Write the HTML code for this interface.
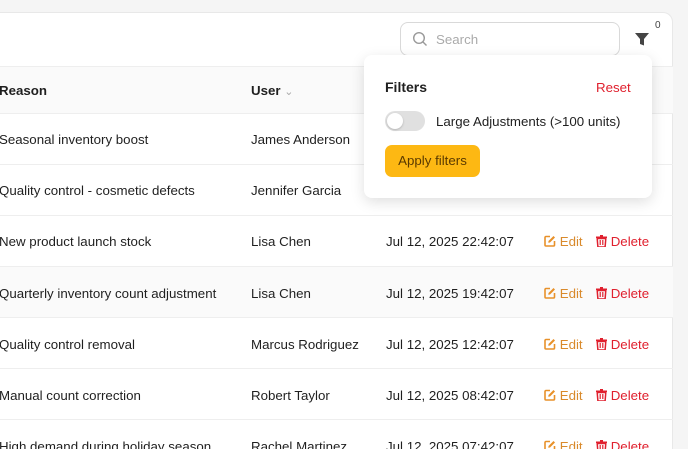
<!DOCTYPE html>
<html style="overflow:hidden;width:688px;height:449px"><head><style>
*{box-sizing:border-box;margin:0;padding:0}
body{width:688px;height:449px;overflow:hidden;background:#f5f5f5;font-family:"Liberation Sans",sans-serif;font-size:13.3px;color:#1f1f1f;position:relative}
.card{position:absolute;left:-20px;top:12px;width:693px;height:437px;background:#fff;border:1px solid #e8e8e8;border-bottom:none;border-radius:10px 10px 0 0;overflow:hidden}
.hdr{position:absolute;left:0;top:66px;width:673px;height:48px;background:#fafafa;border-top:1px solid #eee;border-bottom:1px solid #eee}
.row{position:absolute;left:0;width:673px;height:51px;border-bottom:1px solid #eee}
.t{position:absolute;white-space:nowrap}
.search{position:absolute;left:400px;top:22px;width:220px;height:34px;border:1px solid #d9d9d9;border-radius:8px;background:#fff}
.pop{position:absolute;left:364px;top:55px;width:288px;height:143px;background:#fff;border-radius:8px;box-shadow:0 4px 14px rgba(0,0,0,.13)}
.edit{color:#d98a2c}.del{color:#e0202e}
</style></head><body>
<div class="card"></div>
<div class="hdr"></div>
<div class="t" style="left:-1px;top:83px;font-weight:bold">Reason</div>
<div class="t" style="left:251px;top:83px;font-weight:bold">User <span style="color:#aaa;font-weight:normal;font-size:11px">&#8964;</span></div>
<div class="row" style="top:114px"></div>
<div class="row" style="top:165px"></div>
<div class="row" style="top:216px"></div>
<div class="row" style="top:267px;background:#fafafa"></div>
<div class="row" style="top:318px"></div>
<div class="row" style="top:369px"></div>
<div class="row" style="top:420px"></div>
<div class="t" style="left:-1px;top:132px">Seasonal inventory boost</div><div class="t" style="left:251px;top:132px">James Anderson</div>
<div class="t" style="left:-1px;top:183px">Quality control - cosmetic defects</div><div class="t" style="left:251px;top:183px">Jennifer Garcia</div>
<div class="t" style="left:-1px;top:234px">New product launch stock</div><div class="t" style="left:251px;top:234px">Lisa Chen</div><div class="t" style="left:386px;top:234px">Jul 12, 2025 22:42:07</div>
<div class="t" style="left:-1px;top:286px">Quarterly inventory count adjustment</div><div class="t" style="left:251px;top:286px">Lisa Chen</div><div class="t" style="left:386px;top:286px">Jul 12, 2025 19:42:07</div>
<div class="t" style="left:-1px;top:337px">Quality control removal</div><div class="t" style="left:251px;top:337px">Marcus Rodriguez</div><div class="t" style="left:386px;top:337px">Jul 12, 2025 12:42:07</div>
<div class="t" style="left:-1px;top:388px">Manual count correction</div><div class="t" style="left:251px;top:388px">Robert Taylor</div><div class="t" style="left:386px;top:388px">Jul 12, 2025 08:42:07</div>
<div class="t" style="left:-1px;top:439px">High demand during holiday season</div><div class="t" style="left:251px;top:439px">Rachel Martinez</div><div class="t" style="left:386px;top:439px">Jul 12, 2025 07:42:07</div>
<div id="acts"></div>
<script>
var ys=[234,286,337,388,439],h='';
ys.forEach(function(y){h+='<div class="t edit" style="left:544px;top:'+y+'px"><svg width="12" height="12" viewBox="0 0 12 12" style="vertical-align:-1px"><path d="M6 1.5H2a1 1 0 0 0-1 1v7.5a1 1 0 0 0 1 1h7.5a1 1 0 0 0 1-1V6" fill="none" stroke="#e8912a" stroke-width="1.6"/><path d="M9.5 1 11 2.5 6 7.5 4.3 7.7 4.5 6Z" fill="#e8912a"/></svg> Edit</div><div class="t del" style="left:596px;top:'+y+'px"><svg width="11" height="12" viewBox="0 0 11 12" style="vertical-align:-1px"><path d="M4 0h3v1.5h4v1.5H0V1.5h4Z" fill="#e0202e"/><path d="M1.2 3.5h8.6l-.7 8.5H1.9Z" fill="none" stroke="#e0202e" stroke-width="1.5"/><path d="M4.2 5v5M6.8 5v5" stroke="#e0202e" stroke-width="1.2"/></svg> Delete</div>';});
document.getElementById('acts').innerHTML=h;
</script>
<div class="search"><svg width="16" height="16" viewBox="0 0 16 16" style="position:absolute;left:11px;top:8px"><circle cx="7" cy="7" r="5.3" fill="none" stroke="#999" stroke-width="1.4"/><path d="M11 11l3.5 3.5" stroke="#999" stroke-width="1.4"/></svg><span class="t" style="left:35px;top:9px;color:#aaa">Search</span></div>
<svg width="16" height="16" viewBox="0 0 16 16" style="position:absolute;left:634px;top:31px"><path d="M1 2h14L10 8v6.5L6 13V8Z" fill="#444"/></svg>
<div class="t" style="left:655px;top:20px;font-size:10px;color:#444">0</div>
<div class="pop">
<div class="t" style="left:21px;top:24px;font-size:14px;font-weight:bold">Filters</div>
<div class="t" style="left:232px;top:25px;color:#e0202e">Reset</div>
<div style="position:absolute;left:21px;top:56px;width:40px;height:20px;border-radius:10px;background:#e0e0e0"><div style="position:absolute;left:2px;top:2px;width:16px;height:16px;border-radius:50%;background:#fff;box-shadow:0 1px 2px rgba(0,0,0,.2)"></div></div>
<div class="t" style="left:72px;top:59px">Large Adjustments (&gt;100 units)</div>
<div style="position:absolute;left:21px;top:90px;width:95px;height:32px;border-radius:7px;background:#fdb813;color:#5a3a00;text-align:center;line-height:32px">Apply filters</div>
</div>
</body></html>
